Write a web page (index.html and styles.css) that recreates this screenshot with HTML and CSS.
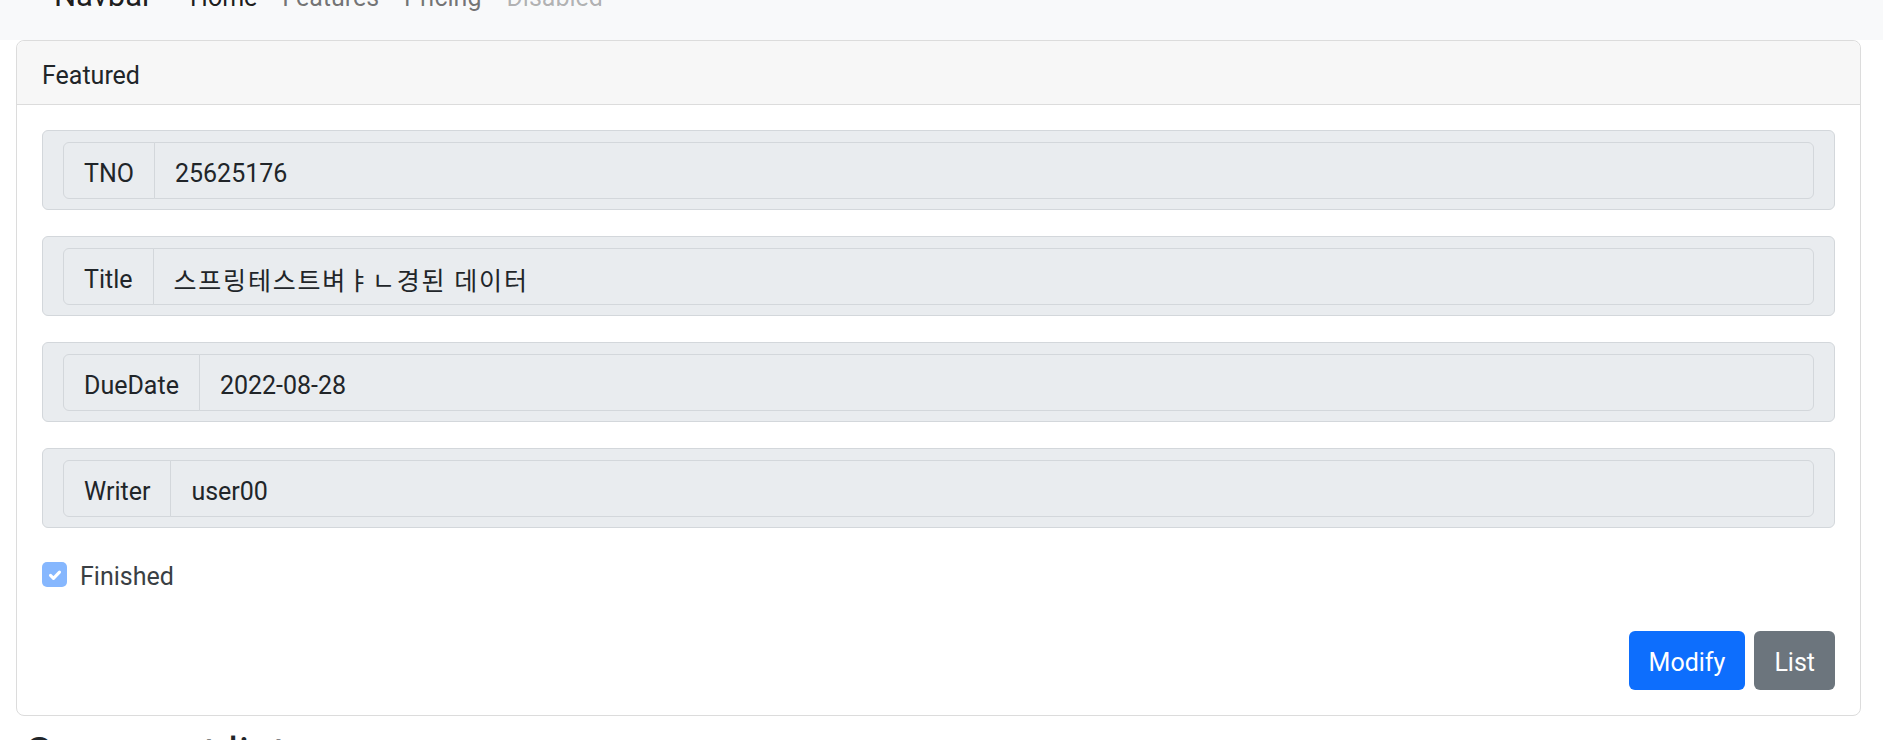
FILE: index.html
```html
<!DOCTYPE html>
<html lang="ko">
<head>
    <meta charset="UTF-8">
    <meta name="viewport" content="width=device-width, initial-scale=1.0">
    <title>Todo Modify</title>
    <link rel="stylesheet" href="styles.css">
</head>
<body>
    <nav class="navbar">
        <div class="nav-inner">
            <a class="brand" href="#">Navbar</a>
            <a class="nav-link active" href="#">Home</a>
            <a class="nav-link" href="#">Features</a>
            <a class="nav-link" href="#">Pricing</a>
            <a class="nav-link disabled">Disabled</a>
        </div>
    </nav>

    <div class="page">
        <div class="card">
            <div class="card-header">Featured</div>
            <div class="card-body">
                <div class="field">
                    <div class="input-group">
                        <span class="label">TNO</span>
                        <div class="value">25625176</div>
                    </div>
                </div>
                <div class="field">
                    <div class="input-group">
                        <span class="label">Title</span>
                        <div class="value ko">스프링테스트벼ㅑㄴ경된 데이터</div>
                    </div>
                </div>
                <div class="field">
                    <div class="input-group">
                        <span class="label">DueDate</span>
                        <div class="value">2022-08-28</div>
                    </div>
                </div>
                <div class="field">
                    <div class="input-group">
                        <span class="label">Writer</span>
                        <div class="value">user00</div>
                    </div>
                </div>

                <div class="check">
                    <span class="check-box">
                        <svg width="18" height="18" viewBox="0 0 20 20"><path d="M5 10.5l3.3 3.3 6.7-7" fill="none" stroke="#fff" stroke-width="3.4" stroke-linecap="round" stroke-linejoin="round"/></svg>
                    </span>
                    <span class="check-label">Finished</span>
                </div>

                <div class="actions">
                    <button class="btn btn-primary">Modify</button>
                    <button class="btn btn-secondary">List</button>
                </div>
            </div>
        </div>

        <h2 class="next-title">Comment list</h2>
    </div>
</body>
</html>
```

FILE: styles.css
```css
body {
    margin: 0;
    font-family: Roboto, "Noto Sans CJK KR", sans-serif;
    font-size: 25px;
    color: #212529;
    background: #fff;
    overflow: hidden;
}

a {
    text-decoration: none;
}

.navbar {
    height: 40px;
    background: #f8f9fa;
    overflow: hidden;
}

.nav-inner {
    display: flex;
    align-items: baseline;
    padding-left: 54px;
    margin-top: -27px;
}

.brand {
    font-size: 31px;
    line-height: 1.5;
    color: rgba(0, 0, 0, 0.9);
    margin-right: 25px;
}

.nav-link {
    font-size: 25px;
    line-height: 1.5;
    padding: 0 12.5px;
    color: rgba(0, 0, 0, 0.55);
}

.nav-link.active {
    color: rgba(0, 0, 0, 0.9);
}

.nav-link.disabled {
    color: rgba(0, 0, 0, 0.3);
}

.page {
    padding: 0 22px 0 16px;
}

.card {
    border: 1px solid #dcdcdc;
    border-radius: 8px;
    background: #fff;
}

.card-header {
    height: 64px;
    box-sizing: border-box;
    display: flex;
    align-items: center;
    padding: 5px 25px 0;
    background: #f7f7f7;
    border-bottom: 1px solid #dcdcdc;
    border-radius: 8px 8px 0 0;
}

.card-body {
    padding: 25px;
}

.field {
    background: #e9ecef;
    border: 1px solid #d3d7db;
    border-radius: 6px;
    padding: 11px 20px 10px 20px;
    margin-bottom: 26px;
}

.input-group {
    display: flex;
    height: 57px;
}

.label, .value {
    display: flex;
    align-items: center;
    padding: 5px 20px 0;
    border: 1px solid #d3d7db;
    background: #e9ecef;
}

.label {
    border-radius: 6px 0 0 6px;
}

.value {
    flex: 1;
    margin-left: -1px;
    border-radius: 0 6px 6px 0;
}

.value.ko {
    letter-spacing: 1.8px;
}

.check {
    display: flex;
    align-items: center;
    height: 37px;
    padding-top: 2px;
}

.check-box {
    width: 25px;
    height: 25px;
    border-radius: 5px;
    background: #86b7fe;
    display: flex;
    align-items: center;
    justify-content: center;
    margin-right: 13px;
}

.check-label {
    padding-top: 3px;
    color: #3a3f44;
}

.actions {
    display: flex;
    justify-content: flex-end;
    gap: 9px;
    margin-top: 38px;
}

.btn {
    height: 59px;
    padding: 3px 20px 0;
    font-family: inherit;
    font-size: 25px;
    color: #fff;
    border: none;
    border-radius: 6px;
    cursor: pointer;
}

.btn-primary {
    background: #0d6efd;
}

.btn-secondary {
    background: #6c757d;
}

.next-title {
    margin: 12px 0 0 8px;
    font-size: 44px;
    line-height: 1.2;
    font-weight: 400;
}
```
